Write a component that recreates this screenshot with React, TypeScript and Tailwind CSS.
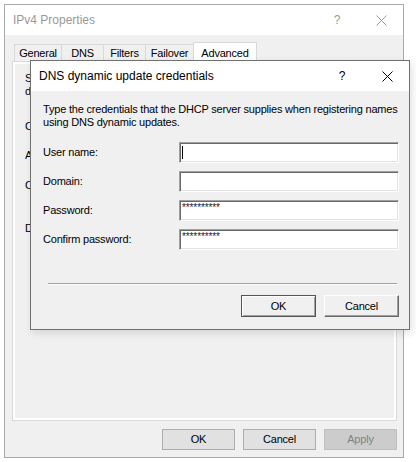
import React from "react";

const FONT = "font-['Liberation_Sans',Arial,sans-serif]";

function CloseGlyph({ color }: { color: string }) {
  return (
    <svg width="11" height="11" viewBox="0 0 11 11" className="block">
      <path d="M0.5 0.5 L10.5 10.5 M10.5 0.5 L0.5 10.5" stroke={color} strokeWidth="1" fill="none" />
    </svg>
  );
}

const TABS = [
  { label: "General", w: "w-[47px]" },
  { label: "DNS", w: "w-[42px]" },
  { label: "Filters", w: "w-[42px]" },
  { label: "Failover", w: "w-[48px]" },
];

const FIELDS = [
  { label: "User name:", value: "", caret: true },
  { label: "Domain:", value: "" },
  { label: "Password:", value: "**********" },
  { label: "Confirm password:", value: "**********" },
];

// text of the Advanced page, mostly hidden behind the dialog
const PAGE_LINES = [
  { text: "Specify the number of times the DHCP server should attempt conflict", mt: "mt-0" },
  { text: "detection for IPv4 addresses before it leases an address.", mt: "mt-0" },
  { text: "Conflict detection attempts:", mt: "mt-[22px]" },
  { text: "Audit log file path:", mt: "mt-[16px]" },
  { text: "Change server connection bindings:", mt: "mt-[17px]" },
  { text: "DNS dynamic updates registration credentials:", mt: "mt-[30px]" },
];

function SunkenBox({ value, caret }: { value: string; caret?: boolean }) {
  return (
    <div className="relative h-[21px] border border-t-[#a0a0a0] border-l-[#a0a0a0] border-r-white border-b-white bg-white shadow-[inset_1px_1px_0_#696969,inset_-1px_-1px_0_#e3e3e3]">
      {caret && <div className="absolute left-[2px] top-[3px] h-[13px] w-px bg-black" />}
      {value && (
        <div className="absolute left-[2px] top-[2px] text-[10px] leading-[10px] tracking-[-0.1px] text-[#1a1a2e]">
          {value}
        </div>
      )}
    </div>
  );
}

export default function App() {
  return (
    <div className={`relative h-[462px] w-[416px] bg-white pl-[4px] pt-[4px] text-[11px] tracking-[-0.2px] text-black ${FONT}`}>
      {/* property sheet */}
      <div className="flex h-[454px] w-[400px] flex-col border border-[#aaaaaa]">
        <div className="flex h-[30px] shrink-0 items-center bg-white pl-[8px] text-[12px] tracking-normal text-[#999999]">
          <span>IPv4 Properties</span>
          <div className="ml-auto flex items-center">
            <span className="w-[44px] text-center">?</span>
            <span className="flex w-[44px] justify-center">
              <CloseGlyph color="#999999" />
            </span>
          </div>
        </div>

        <div className="flex flex-1 flex-col bg-[#f0f0f0] pl-[7px] pr-[6px] pt-[7px]">
          <div className="ml-[2px] flex h-[19px] items-end">
            {TABS.map((t) => (
              <div
                key={t.label}
                className={`flex h-[17px] items-center justify-center border border-b-0 border-r-0 border-[#d9d9d9] ${t.w}`}
              >
                {t.label}
              </div>
            ))}
            <div className="flex h-[19px] w-[64px] items-start justify-center border border-b-0 border-[#d9d9d9] bg-white pt-[2px]">
              Advanced
            </div>
          </div>

          <div className="h-[360px] border border-[#d9d9d9] bg-white p-[2px]">
            <div className="h-full bg-[#f0f0f0] pl-[10px] pt-[8px] leading-[13px]">
              {PAGE_LINES.map((l) => (
                <div key={l.text} className={`w-[15px] overflow-hidden whitespace-nowrap ${l.mt}`}>
                  {l.text}
                </div>
              ))}
            </div>
          </div>

          <div className="mt-[8px] flex justify-end gap-[8px]">
            <button className="h-[21px] w-[73px] border border-[#adadad] bg-[#e1e1e1]">OK</button>
            <button className="h-[21px] w-[73px] border border-[#adadad] bg-[#e1e1e1]">Cancel</button>
            <button className="h-[21px] w-[73px] border border-[#bfbfbf] bg-[#cccccc] text-[#838383]">
              Apply
            </button>
          </div>
        </div>
      </div>

      {/* credentials dialog over the sheet */}
      <div className="absolute left-[30px] top-[60px] flex h-[270px] w-[380px] flex-col border border-[#707070] bg-[#f0f0f0] shadow-[2px_3px_8px_rgba(0,0,0,0.12)]">
        <div className="flex h-[30px] shrink-0 items-center bg-white pl-[8px] text-[12px] tracking-normal">
          <span>DNS dynamic update credentials</span>
          <div className="ml-auto flex items-center">
            <span className="w-[46px] text-center">?</span>
            <span className="flex w-[44px] justify-center">
              <CloseGlyph color="#000000" />
            </span>
          </div>
        </div>

        <div className="flex flex-col pl-[12px] pr-[10px] pt-[12px]">
          <div className="whitespace-nowrap leading-[13px]">
            Type the credentials that the DHCP server supplies when registering names
            <br />
            using DNS dynamic updates.
          </div>

          <div className="mt-[13px] grid grid-cols-[136px_1fr] gap-y-[8px]">
            {FIELDS.map((f) => (
              <React.Fragment key={f.label}>
                <div className="flex h-[21px] items-center">{f.label}</div>
                <SunkenBox value={f.value} caret={f.caret} />
              </React.Fragment>
            ))}
          </div>

          <div className="ml-[5px] mr-[2px] mt-[33px] border-b border-t border-b-white border-t-[#a0a0a0]" />

          <div className="mt-[10px] flex justify-end gap-[8px]">
            <button className="h-[22px] w-[75px] border border-[#555555] bg-[#f0f0f0] shadow-[inset_1px_1px_0_#ffffff,inset_-1px_-1px_0_#a0a0a0]">
              OK
            </button>
            <button className="h-[22px] w-[75px] border border-b-[#696969] border-l-white border-r-[#696969] border-t-white bg-[#f0f0f0] shadow-[inset_-1px_-1px_0_#a0a0a0]">
              Cancel
            </button>
          </div>
        </div>
      </div>
    </div>
  );
}
